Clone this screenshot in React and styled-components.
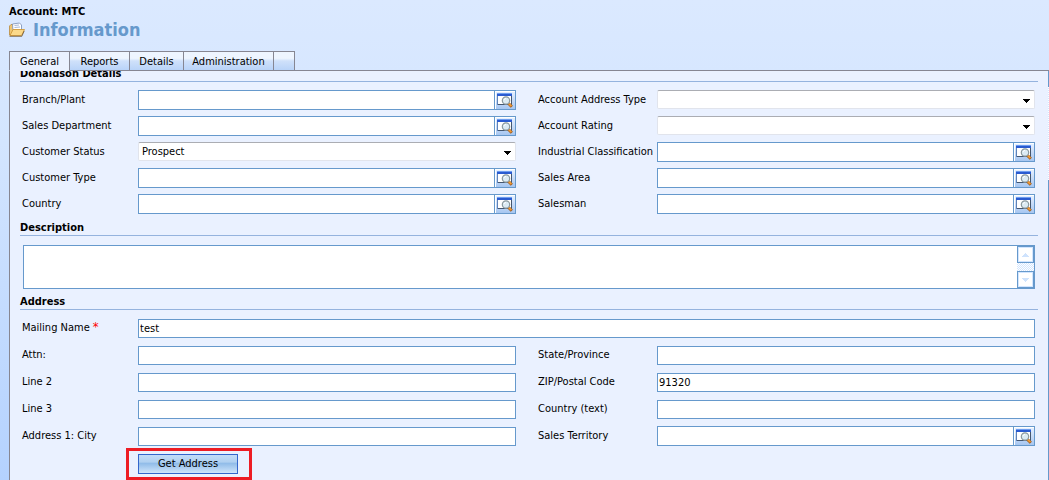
import { useState } from "react";
import styled, { createGlobalStyle } from "styled-components";

const colors = {
  text: "#000",
  blue: "#6699cc",
  rule: "#95b3de",
  panel: "#eaf1ff",
  tabBorder: "#868692",
  red: "#ed1c24",
};

const tabs = [
  { name: "General", width: 60 },
  { name: "Reports", width: 60 },
  { name: "Details", width: 54 },
  { name: "Administration", width: 90 },
];

const donaldsonFields = [
  { label: "Branch/Plant", type: "lookup" },
  { label: "Account Address Type", type: "select", right: true },
  { label: "Sales Department", type: "lookup" },
  { label: "Account Rating", type: "select", right: true },
  { label: "Customer Status", type: "select", value: "Prospect" },
  { label: "Industrial Classification", type: "lookup", right: true },
  { label: "Customer Type", type: "lookup" },
  { label: "Sales Area", type: "lookup", right: true },
  { label: "Country", type: "lookup" },
  { label: "Salesman", type: "lookup", right: true },
];

const addressFields = [
  { label: "Mailing Name", type: "text", value: "test", required: true, wide: true },
  { label: "Attn:", type: "text" },
  { label: "State/Province", type: "text", right: true },
  { label: "Line 2", type: "text" },
  { label: "ZIP/Postal Code", type: "text", value: "91320", right: true },
  { label: "Line 3", type: "text" },
  { label: "Country (text)", type: "text", right: true },
  { label: "Address 1: City", type: "text" },
  { label: "Sales Territory", type: "lookup", right: true },
];

const toId = (label) => label.toLowerCase().replace(/[^a-z0-9]+/g, "-");

const FolderIcon = () => (
  <svg width="16" height="16" viewBox="0 0 16 16" aria-hidden="true">
    <path d="M.5 4 L2 2.5 H5 L6 5 V13 H.5 Z" fill="#f0c672" stroke="#b98a3c" strokeWidth=".8" />
    <path d="M3.5 2 L10.5 1 L12.5 3 V10 H4 Z" fill="#fff" stroke="#8296bb" strokeWidth=".9" />
    <path d="M5.5 3.5 L10 3 M5.5 5.5 L11 5" stroke="#8fa5cf" strokeWidth=".8" />
    <path d="M1 13.5 L4 7.5 H15.5 L12.5 13.5 Z" fill="#fbd98a" stroke="#d09a3a" strokeWidth=".9" />
    <path d="M.5 14.3 H12.8 L15.2 9" fill="none" stroke="#6b5433" strokeWidth=".8" />
  </svg>
);

const LookupIcon = () => (
  <svg width="16" height="16" viewBox="0 0 16 16" aria-hidden="true">
    <rect x=".5" y="1.5" width="14" height="11" fill="#fff" stroke="#5f83b8" />
    <path d="M14.5 4 V12.5 H1" fill="none" stroke="#44566f" />
    <rect x="0" y="1" width="15" height="3" fill="#2a5bd0" />
    <rect x="0" y="1" width="15" height="1" fill="#6d9cf0" />
    <path d="M11.5 11.5 L14.8 14.8" stroke="#9a5a1c" strokeWidth="3" />
    <path d="M11.8 11.6 L14.4 14.2" stroke="#f39a35" strokeWidth="1.8" />
    <circle cx="9" cy="8.5" r="3.7" fill="#dcebf3" stroke="#8a989c" strokeWidth="1.2" />
    <path d="M7 8 Q7.5 6.5 9 6.4" fill="none" stroke="#fff" />
  </svg>
);

const Arrow = ({ up, fill }) => (
  <svg width="7" height="4" viewBox="0 0 7 4" shapeRendering="crispEdges" aria-hidden="true">
    <path d={up ? "M0 4 L3.5 0 L7 4 Z" : "M0 0 L3.5 4 L7 0 Z"} fill={fill} />
  </svg>
);

const Control = ({ id, type, value = "" }) => {
  if (type === "select") {
    return (
      <SelectBox>
        <Select id={id} defaultValue={value}>
          <option value={value}>{value}</option>
        </Select>
        <Arrow fill="#000" />
      </SelectBox>
    );
  }
  if (type === "lookup") {
    return (
      <LookupBox>
        <LookupInput id={id} type="text" defaultValue={value} />
        <LookupButton type="button" aria-label="Look up">
          <LookupIcon />
        </LookupButton>
      </LookupBox>
    );
  }
  return <TextInput id={id} type="text" defaultValue={value} />;
};

const Fields = ({ fields, rowHeight }) => (
  <FieldGrid $rowHeight={rowHeight}>
    {fields.map(({ label, type, value, required, wide, right }) => (
      <Field key={label}>
        <Label htmlFor={toId(label)} $right={right}>
          {label}
          {required && <Required>*</Required>}
        </Label>
        <Cell $wide={wide}>
          <Control id={toId(label)} type={type} value={value} />
        </Cell>
      </Field>
    ))}
  </FieldGrid>
);

const App = () => {
  const [active, setActive] = useState("General");

  return (
    <Page>
      <GlobalStyle />
      <Header>
        <Account>Account: MTC</Account>
        <TitleRow>
          <FolderIcon />
          <Title>Information</Title>
        </TitleRow>
      </Header>
      <TabList role="tablist">
        {tabs.map(({ name, width }) => (
          <Tab
            key={name}
            type="button"
            role="tab"
            aria-selected={active === name}
            $active={active === name}
            $width={width}
            onClick={() => setActive(name)}
          >
            {name}
          </Tab>
        ))}
        <TabEnd />
      </TabList>
      <Panel>
        <Form onSubmit={(e) => e.preventDefault()}>
          {/* Donaldson details */}
          <SectionTitle>Donaldson Details</SectionTitle>
          <Fields fields={donaldsonFields} rowHeight={26} />
          {/* Description */}
          <SectionTitle id="description">Description</SectionTitle>
          <Description>
            <TextArea aria-labelledby="description" />
            <Scroller>
              <ScrollButton type="button" aria-label="Scroll up">
                <Arrow up fill="#cfe3fd" />
              </ScrollButton>
              <ScrollTrack />
              <ScrollButton type="button" aria-label="Scroll down">
                <Arrow fill="#cfe3fd" />
              </ScrollButton>
            </Scroller>
          </Description>
          {/* Address */}
          <SectionTitle>Address</SectionTitle>
          <Fields fields={addressFields} rowHeight={27} />
          <Actions>
            <Highlight>
              <Button type="button">Get Address</Button>
            </Highlight>
          </Actions>
        </Form>
        <PanelScroll>
          <PanelThumb $size={16} />
          <PanelTrack />
          <PanelThumb />
        </PanelScroll>
      </Panel>
    </Page>
  );
};

const GlobalStyle = createGlobalStyle`
  * {
    box-sizing: border-box;
  }
  body {
    margin: 0;
    color: ${colors.text};
  }
  body, button, input, select, textarea {
    font-family: Tahoma, "DejaVu Sans Condensed", "DejaVu Sans", sans-serif;
    font-size: 11px;
  }
`;

const Page = styled.div`
  display: flex;
  flex-direction: column;
  height: 100vh;
  padding-left: 9px;
  background: linear-gradient(#dbe9ff, #d3e5ff 30%, #b4d2ff);
`;

const Header = styled.header`
  padding-top: 4px;
  height: 51px;
`;

const Account = styled.div`
  font-weight: bold;
  line-height: 15px;
`;

const TitleRow = styled.div`
  display: flex;
  align-items: center;
  gap: 8px;
  height: 22px;
`;

const Title = styled.h1`
  margin: 0;
  font-size: 18px;
  line-height: 22px;
  color: ${colors.blue};
`;

const TabList = styled.div`
  display: flex;
  height: 20px;
  position: relative;
  z-index: 1;
  margin-bottom: -1px;
`;

const Tab = styled.button`
  width: ${({ $width }) => $width}px;
  padding: 1px 0 0;
  border: 1px solid ${colors.tabBorder};
  border-right-width: 0;
  border-bottom-color: ${({ $active }) => ($active ? colors.panel : colors.tabBorder)};
  background: ${({ $active }) =>
    $active ? colors.panel : "linear-gradient(#eef5ff 35%, #cfe1fa 50%, #b9d3f8)"};
  line-height: 18px;
`;

const TabEnd = styled.div`
  width: 22px;
  border: 1px solid ${colors.tabBorder};
  background: linear-gradient(#eef5ff 35%, #cfe1fa 50%, #b9d3f8);
`;

const Panel = styled.main`
  display: flex;
  flex: 1;
  min-height: 0;
  overflow: hidden;
  border: solid ${colors.tabBorder};
  border-width: 1px 0 0 1px;
  background: ${colors.panel};
`;

const Form = styled.form`
  flex: 1;
  min-width: 0;
  margin-top: -8px;
  padding: 0 10px;
`;

const SectionTitle = styled.h2`
  margin: 0;
  height: 19px;
  border-bottom: 1px solid ${colors.rule};
  font-size: 11px;
  line-height: 22px;
`;

const FieldGrid = styled.div`
  display: grid;
  grid-template-columns: 116px 1fr 141px 1fr;
  grid-auto-rows: ${({ $rowHeight }) => $rowHeight}px;
  padding: 5px 3px 0 2px;
`;

const Field = styled.div`
  display: contents;
`;

const Label = styled.label`
  padding: 5px 0 0 ${({ $right }) => ($right ? 22 : 0)}px;
  line-height: 16px;
  white-space: nowrap;
`;

const Required = styled.span`
  margin-left: 3px;
  font-size: 13px;
  line-height: 12px;
  color: #f00;
`;

const Cell = styled.div`
  min-width: 0;
  padding-top: 3px;
  ${({ $wide }) => $wide && "grid-column: span 3;"}
`;

const TextInput = styled.input`
  display: block;
  width: 100%;
  height: 19px;
  margin: 1px 0 0;
  padding: 0 1px;
  border: 1px solid ${colors.blue};
  background: #fff;
  outline: none;
`;

const LookupBox = styled.div`
  display: flex;
  height: 20px;
  border: 1px solid ${colors.blue};
  background: #fff;
`;

const LookupInput = styled.input`
  flex: 1;
  min-width: 0;
  padding: 0 1px;
  border: 0;
  outline: none;
`;

const LookupButton = styled.button`
  display: flex;
  align-items: center;
  justify-content: center;
  width: 21px;
  padding: 0;
  border: 0;
  border-left: 1px solid ${colors.blue};
  background: linear-gradient(#e9f2ff, #a6c6f1);
  box-shadow: inset 1px 1px #fff;
`;

const SelectBox = styled.div`
  position: relative;
  svg {
    position: absolute;
    right: 5px;
    top: 9px;
    pointer-events: none;
  }
`;

const Select = styled.select`
  display: block;
  width: 100%;
  height: 19px;
  padding: 0 16px 0 3px;
  appearance: none;
  border: 1px solid #e1e4ec;
  border-top-color: #abadb3;
  border-radius: 2px;
  background: #fff;
  color: ${colors.text};
`;

const Description = styled.div`
  display: flex;
  height: 44px;
  margin: 9px 3px 2px;
  border: 1px solid ${colors.blue};
  background: #fff;
`;

const TextArea = styled.textarea`
  flex: 1;
  padding: 1px;
  border: 0;
  outline: none;
  resize: none;
`;

const Scroller = styled.div`
  display: flex;
  flex-direction: column;
  width: 17px;
`;

const ScrollButton = styled.button`
  display: flex;
  align-items: center;
  justify-content: center;
  height: 17px;
  padding: 0;
  border: 1px solid ${colors.blue};
  background: #fff;
  box-shadow: inset 0 0 0 1px #d3e6ff;
`;

const ScrollTrack = styled.div`
  flex: 1;
  background: repeating-conic-gradient(#d3e6ff 0 25%, #fff 0 50%) 0 0 / 2px 2px;
`;

const Actions = styled.div`
  padding: 4px 0 6px 118px;
`;

const Highlight = styled.div`
  position: relative;
  width: 100px;
  &::after {
    content: "";
    position: absolute;
    inset: -6px -14px -6px -12px;
    border: 3px solid ${colors.red};
    pointer-events: none;
  }
`;

const Button = styled.button`
  display: block;
  width: 100%;
  height: 20px;
  padding: 0;
  border: 1px solid #3366cc;
  background: linear-gradient(#c3dcf8, #afd0f0 40%, #8fbbe8 45%, #cfe5fb);
  line-height: 18px;
`;

const PanelScroll = styled.div`
  display: flex;
  flex-direction: column;
  width: 1px;
`;

const PanelThumb = styled.div`
  flex: ${({ $size }) => ($size ? `0 0 ${$size}px` : 1)};
  background: ${colors.blue};
`;

const PanelTrack = styled.div`
  height: 93px;
  background: repeating-linear-gradient(#fff 0 1px, #d3e6ff 1px 2px);
`;

export default App;
